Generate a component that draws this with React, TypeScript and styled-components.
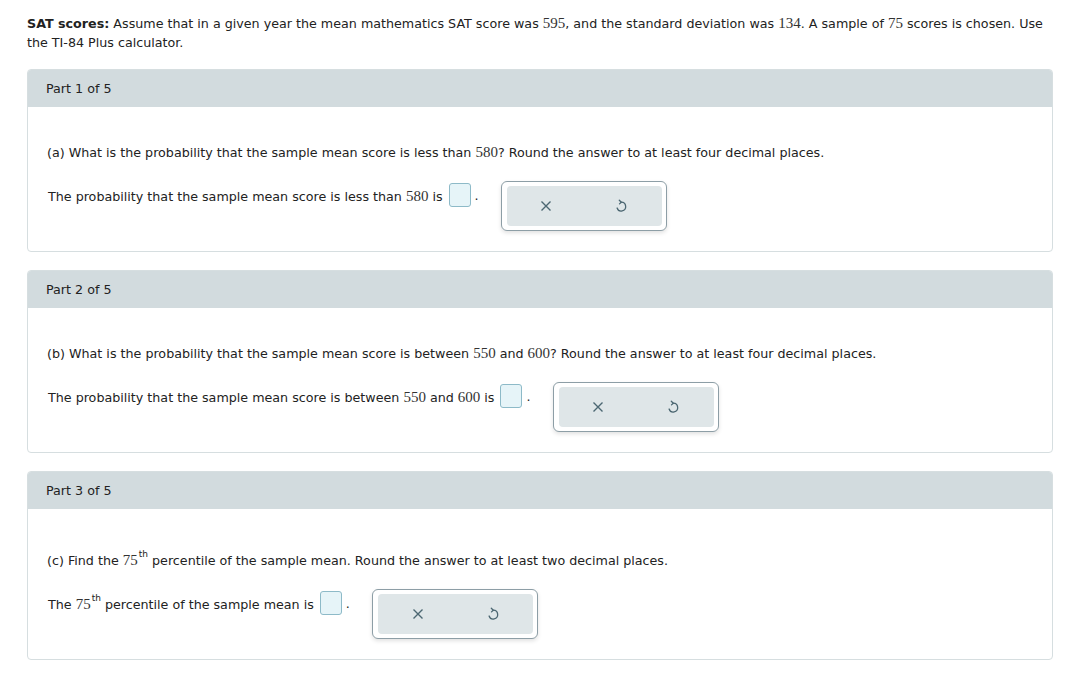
import React from "react";
import styled, { createGlobalStyle } from "styled-components";

const Global = createGlobalStyle`
  html, body { margin: 0; padding: 0; background: #fff; }
  body { font-family: "DejaVu Sans", Verdana, sans-serif; font-size: 12.7px; color: #222; }
`;

const Page = styled.div`
  padding: 14px 24px 20px 27px;
`;

const Intro = styled.p`
  margin: 0 0 17px 0;
  line-height: 19px;
`;

const Num = styled.span`
  font-family: "Liberation Serif", "Times New Roman", serif;
  font-size: 15px;
  line-height: 1;
  color: #333;
`;

const Sup = styled.sup`
  font-size: 9px;
  vertical-align: 8px;
  line-height: 0;
  margin-left: 1px;
`;

const Panel = styled.section`
  border: 1px solid #d6dee0;
  border-radius: 4px;
  margin-bottom: 18px;
  overflow: hidden;
`;

const Header = styled.div`
  background: #d2dbde;
  height: 37px;
  display: flex;
  align-items: center;
  padding-left: 18px;
`;

const Body = styled.div<{ $top: number }>`
  padding: ${(p) => p.$top}px 19px 20px 19px;
`;

const Question = styled.div`
  line-height: 19px;
  margin-bottom: 19px;
`;

const AnswerRow = styled.div`
  display: flex;
  align-items: flex-start;
  padding-left: 1px;
`;

const AnswerText = styled.div`
  display: flex;
  align-items: center;
  height: 24px;
  margin-top: 2px;
`;

const Phrase = styled.span`
  white-space: nowrap;
  position: relative;
  top: 1px;
`;

const InputBox = styled.span`
  display: inline-block;
  width: 20px;
  height: 22px;
  border: 1px solid #8dbac8;
  border-radius: 3px;
  background: #e6f4f8;
  margin-left: 6px;
`;

const Dot = styled.span`
  margin-left: 4px;
`;

const Tools = styled.div`
  margin-left: 22px;
  width: 155px;
  height: 40px;
  border: 1px solid #8d9ea6;
  border-radius: 6px;
  background: #fff;
  box-shadow: 0 2px 4px rgba(0, 0, 0, 0.12);
  padding: 4px 4px 4px 5px;
  box-sizing: content-box;
  display: flex;
`;

const ToolsInner = styled.div`
  flex: 1;
  background: #dfe6e8;
  border-radius: 4px;
  display: flex;
  align-items: center;
  justify-content: space-around;
  padding: 0 2px;
`;

const ToolButton = styled.span`
  width: 40px;
  display: flex;
  justify-content: center;
  align-items: center;
  color: #4c6772;
`;

const XIcon = () => (
  <svg width="12" height="12" viewBox="0 0 12 12">
    <path d="M1.5 1.5 L10.5 10.5 M10.5 1.5 L1.5 10.5" stroke="currentColor" strokeWidth="1.4" fill="none" />
  </svg>
);

const UndoIcon = () => (
  <svg width="13" height="15" viewBox="0 0 13 15">
    <path
      d="M6.3 3.2 A4.4 4.4 0 1 1 2.1 9"
      stroke="currentColor"
      strokeWidth="1.3"
      fill="none"
      strokeLinecap="round"
    />
    <path d="M4.3 1.2 L6.3 3.2 L4.5 4.9" stroke="currentColor" strokeWidth="1.3" fill="none" strokeLinecap="round" strokeLinejoin="round" />
  </svg>
);

const ToolBox = () => (
  <Tools>
    <ToolsInner>
      <ToolButton>
        <XIcon />
      </ToolButton>
      <ToolButton>
        <UndoIcon />
      </ToolButton>
    </ToolsInner>
  </Tools>
);

type PartProps = {
  n: number;
  top: number;
  question: React.ReactNode;
  answer: React.ReactNode;
};

const Part = ({ n, top, question, answer }: PartProps) => (
  <Panel>
    <Header>Part {n} of 5</Header>
    <Body $top={top}>
      <Question>{question}</Question>
      <AnswerRow>
        <AnswerText>
          <Phrase>{answer}</Phrase>
          <InputBox />
          <Dot>.</Dot>
        </AnswerText>
        <ToolBox />
      </AnswerRow>
    </Body>
  </Panel>
);

export default function App() {
  return (
    <>
      <Global />
      <Page>
        <Intro>
          <b>SAT scores:</b> Assume that in a given year the mean mathematics SAT score was <Num>595</Num>, and the
          standard deviation was <Num>134</Num>. A sample of <Num>75</Num> scores is chosen. Use the TI-84 Plus
          calculator.
        </Intro>
        <Part
          n={1}
          top={36}
          question={
            <>
              (a) What is the probability that the sample mean score is less than <Num>580</Num>? Round the answer to
              at least four decimal places.
            </>
          }
          answer={
            <>
              The probability that the sample mean score is less than <Num>580</Num> is
            </>
          }
        />
        <Part
          n={2}
          top={36}
          question={
            <>
              (b) What is the probability that the sample mean score is between <Num>550</Num> and <Num>600</Num>?
              Round the answer to at least four decimal places.
            </>
          }
          answer={
            <>
              The probability that the sample mean score is between <Num>550</Num> and <Num>600</Num> is
            </>
          }
        />
        <Part
          n={3}
          top={42}
          question={
            <>
              (c) Find the <Num>75</Num>
              <Sup>th</Sup> percentile of the sample mean. Round the answer to at least two decimal places.
            </>
          }
          answer={
            <>
              The <Num>75</Num>
              <Sup>th</Sup> percentile of the sample mean is
            </>
          }
        />
      </Page>
    </>
  );
}
